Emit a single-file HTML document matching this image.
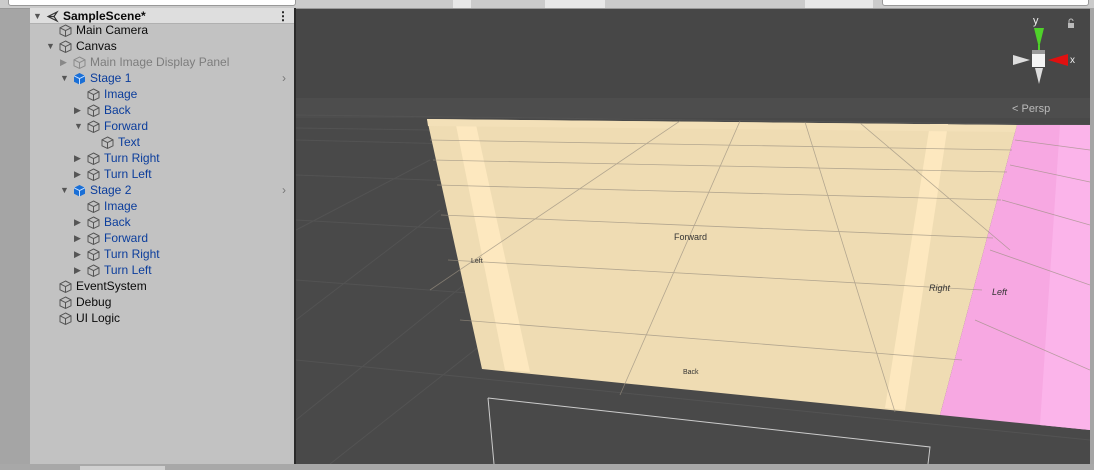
<!DOCTYPE html>
<html><head><style>
body{margin:0;width:1094px;height:470px;overflow:hidden;background:#a5a5a5;font-family:"Liberation Sans",sans-serif;position:relative}
#left{position:absolute;left:0;top:0;width:30px;height:464px;background:#a5a5a5}
#hier{position:absolute;left:30px;top:8px;width:264px;height:456px;background:#c2c2c2}
#topbar{position:absolute;left:0;top:0;width:1094px;height:8px;background:#cbcbcb;border-bottom:1px solid #999}
.row{position:absolute;height:16px;line-height:16px;font-size:12px;color:#0a0a0a;white-space:nowrap}
.b{color:#0b3d9c}.g{color:#7d7d7d}
.ar{position:absolute;font-size:9px;color:#555;top:0}
.ic{position:absolute;top:2px}
#scene{position:absolute;left:296px;top:9px;width:794px;height:455px;background:#474747;overflow:hidden}
</style></head><body>
<div id="left"></div>
<div id="topbar">
<div style="position:absolute;left:8px;top:-4px;width:286px;height:8px;background:#fff;border:1px solid #999;border-radius:3px"></div>
<div style="position:absolute;left:453px;top:0;width:18px;height:8px;background:#e8e8e8"></div>
<div style="position:absolute;left:545px;top:0;width:60px;height:8px;background:#e8e8e8"></div>
<div style="position:absolute;left:805px;top:0;width:68px;height:8px;background:#e8e8e8"></div>
<div style="position:absolute;left:882px;top:-4px;width:205px;height:8px;background:#fff;border:1px solid #999;border-radius:3px"></div>
</div>
<div id="hier">
<div style="position:absolute;left:0;top:0;width:264px;height:15px;background:#dedede;border-bottom:1px solid #b0b0b0"></div>
</div>
<div style="position:absolute;left:294px;top:8px;width:2px;height:456px;background:#2a2a2a"></div>

<svg width="0" height="0" style="position:absolute"><defs>
<g id="cube"><path d="M6.5 1 L12 3.8 L12 9.8 L6.5 12.5 L1 9.8 L1 3.8 Z M1 3.8 L6.5 6.6 L12 3.8 M6.5 6.6 L6.5 12.5" fill="none" stroke="#555" stroke-width="1"/></g>
<g id="bcube"><path d="M6.5 1 L12 3.8 L12 9.8 L6.5 12.5 L1 9.8 L1 3.8 Z" fill="#1a6fd6"/><path d="M1 3.8 L6.5 6.6 L12 3.8 M6.5 6.6 L6.5 12.5" fill="none" stroke="#c9e0ff" stroke-width="1"/></g>
</defs></svg>

<div class="row" style="left:33px;top:8px;width:260px;font-weight:bold"><span class="ar" style="left:0">▼</span>
<svg class="ic" style="left:13px" width="14" height="13"><path d="M2 6.5 L11 2 L8 6.5 L11 11 Z M2 6.5 L8 6.5" fill="none" stroke="#333" stroke-width="1.2"/></svg>
<span style="position:absolute;left:30px">SampleScene*</span><span style="position:absolute;left:244px;font-weight:bold">⋮</span></div>

<div class="row" style="left:59px;top:22px"><svg class="ic" style="left:0" width="14" height="14"><use href="#cube"/></svg><span style="position:absolute;left:17px">Main Camera</span></div>
<div class="row" style="left:46px;top:38px"><span class="ar" style="left:0">▼</span><svg class="ic" style="left:13px" width="14" height="14"><use href="#cube"/></svg><span style="position:absolute;left:30px">Canvas</span></div>
<div class="row g" style="left:60px;top:54px"><span class="ar" style="left:0;color:#888">▶</span><svg class="ic" style="left:13px;opacity:.5" width="14" height="14"><use href="#cube"/></svg><span style="position:absolute;left:30px">Main Image Display Panel</span></div>
<div class="row b" style="left:60px;top:70px;width:232px"><span class="ar" style="left:0">▼</span><svg class="ic" style="left:13px" width="14" height="14"><use href="#bcube"/></svg><span style="position:absolute;left:30px">Stage 1</span><span style="position:absolute;left:222px;color:#777">›</span></div>
<div class="row b" style="left:87px;top:86px"><svg class="ic" style="left:0" width="14" height="14"><use href="#cube"/></svg><span style="position:absolute;left:17px">Image</span></div>
<div class="row b" style="left:74px;top:102px"><span class="ar" style="left:0">▶</span><svg class="ic" style="left:13px" width="14" height="14"><use href="#cube"/></svg><span style="position:absolute;left:30px">Back</span></div>
<div class="row b" style="left:74px;top:118px"><span class="ar" style="left:0">▼</span><svg class="ic" style="left:13px" width="14" height="14"><use href="#cube"/></svg><span style="position:absolute;left:30px">Forward</span></div>
<div class="row b" style="left:101px;top:134px"><svg class="ic" style="left:0" width="14" height="14"><use href="#cube"/></svg><span style="position:absolute;left:17px">Text</span></div>
<div class="row b" style="left:74px;top:150px"><span class="ar" style="left:0">▶</span><svg class="ic" style="left:13px" width="14" height="14"><use href="#cube"/></svg><span style="position:absolute;left:30px">Turn Right</span></div>
<div class="row b" style="left:74px;top:166px"><span class="ar" style="left:0">▶</span><svg class="ic" style="left:13px" width="14" height="14"><use href="#cube"/></svg><span style="position:absolute;left:30px">Turn Left</span></div>
<div class="row b" style="left:60px;top:182px;width:232px"><span class="ar" style="left:0">▼</span><svg class="ic" style="left:13px" width="14" height="14"><use href="#bcube"/></svg><span style="position:absolute;left:30px">Stage 2</span><span style="position:absolute;left:222px;color:#777">›</span></div>
<div class="row b" style="left:87px;top:198px"><svg class="ic" style="left:0" width="14" height="14"><use href="#cube"/></svg><span style="position:absolute;left:17px">Image</span></div>
<div class="row b" style="left:74px;top:214px"><span class="ar" style="left:0">▶</span><svg class="ic" style="left:13px" width="14" height="14"><use href="#cube"/></svg><span style="position:absolute;left:30px">Back</span></div>
<div class="row b" style="left:74px;top:230px"><span class="ar" style="left:0">▶</span><svg class="ic" style="left:13px" width="14" height="14"><use href="#cube"/></svg><span style="position:absolute;left:30px">Forward</span></div>
<div class="row b" style="left:74px;top:246px"><span class="ar" style="left:0">▶</span><svg class="ic" style="left:13px" width="14" height="14"><use href="#cube"/></svg><span style="position:absolute;left:30px">Turn Right</span></div>
<div class="row b" style="left:74px;top:262px"><span class="ar" style="left:0">▶</span><svg class="ic" style="left:13px" width="14" height="14"><use href="#cube"/></svg><span style="position:absolute;left:30px">Turn Left</span></div>
<div class="row" style="left:59px;top:278px"><svg class="ic" style="left:0" width="14" height="14"><use href="#cube"/></svg><span style="position:absolute;left:17px">EventSystem</span></div>
<div class="row" style="left:59px;top:294px"><svg class="ic" style="left:0" width="14" height="14"><use href="#cube"/></svg><span style="position:absolute;left:17px">Debug</span></div>
<div class="row" style="left:59px;top:310px"><svg class="ic" style="left:0" width="14" height="14"><use href="#cube"/></svg><span style="position:absolute;left:17px">UI Logic</span></div>

<div id="scene">
<svg width="794" height="455" viewBox="296 9 794 455" style="position:absolute;left:0;top:0">
<rect x="296" y="98" width="794" height="366" fill="#494949"/>
<rect x="296" y="98" width="794" height="20" fill="#4d4d4d"/>
<g stroke="#535353" stroke-width="1" fill="none">
<path d="M296 140 L1090 160 M296 175 L1090 205 M296 220 L1090 265 M296 280 L1090 340 M296 360 L1090 440 M296 115 L1090 125 M296 128 L1090 140"/>
<path d="M296 320 L440 210 M296 420 L470 280 M330 464 L500 330 M296 230 L430 160"/>
</g>
<polygon points="427,119 1017,125 940,415 482,369" fill="#efdcb3"/>
<polygon points="455,120 475,120 530,372 505,370" fill="#fde8bf"/>
<polygon points="930,124 948,124 905,410 885,408" fill="#fde8bf"/>
<polygon points="427,119 1017,125 1015,132 428,126" fill="#f3e0b8"/>
<polygon points="1017,125 1090,125 1090,430 940,415" fill="#f7a8e2"/>
<polygon points="1060,125 1090,125 1090,430 1040,425" fill="#fbb4ea"/>
<g stroke="#9a9080" stroke-width="0.8" fill="none" opacity=".7">
<path d="M430 140 L1012 150 M433 160 L1007 172 M437 185 L1001 200 M441 215 L993 238 M448 260 L982 290 M460 320 L962 360"/>
<path d="M1015 140 L1090 150 M1010 165 L1090 182 M1002 200 L1090 225 M990 250 L1090 285 M975 320 L1090 370"/>
<path d="M740 121 L620 395 M805 122 L895 412 M680 121 L430 290 M860 123 L1010 250"/>
</g>
<polyline points="488,398 930,447 928,464" fill="none" stroke="#ccc" stroke-width="1"/>
<line x1="488" y1="398" x2="494" y2="464" stroke="#ccc"/>
<g font-family="Liberation Sans" fill="#333">
<text x="674" y="240" font-size="9">Forward</text>
<text x="471" y="263" font-size="7">Left</text>
<text x="929" y="291" font-size="9" font-style="italic">Right</text>
<text x="992" y="295" font-size="9" font-style="italic">Left</text>
<text x="683" y="374" font-size="7">Back</text>
</g>
<text x="1033" y="24" font-size="11" fill="#eee" font-family="Liberation Sans">y</text>
<polygon points="1034,28 1044,28 1039,48" fill="#4fd12a"/>
<line x1="1039" y1="45" x2="1039" y2="52" stroke="#4fd12a" stroke-width="2"/>
<rect x="1032" y="53" width="13" height="14" fill="#f4f4f4"/>
<rect x="1032" y="50" width="13" height="4" fill="#999"/>
<polygon points="1048,60 1068,54 1068,66" fill="#e01010"/>
<text x="1070" y="63" font-size="10" fill="#eee" font-family="Liberation Sans">x</text>
<polygon points="1030,60 1013,55 1013,65" fill="#ddd"/>
<polygon points="1035,68 1043,68 1039,84" fill="#ddd"/>
<rect x="1068" y="23" width="6" height="5" fill="#bbb"/>
<path d="M1069 23 v-2 a2 2 0 0 1 4 0" fill="none" stroke="#bbb"/>
<text x="1012" y="112" font-size="11" fill="#bbb" font-family="Liberation Sans">&lt; Persp</text>
</svg>
</div>
<div style="position:absolute;left:1090px;top:8px;width:4px;height:456px;background:#a5a5a5"></div>
<div style="position:absolute;left:0;top:464px;width:1094px;height:6px;background:#a8a8a8"></div>
<div style="position:absolute;left:80px;top:466px;width:85px;height:4px;background:#d0d0d0"></div>
</body></html>
